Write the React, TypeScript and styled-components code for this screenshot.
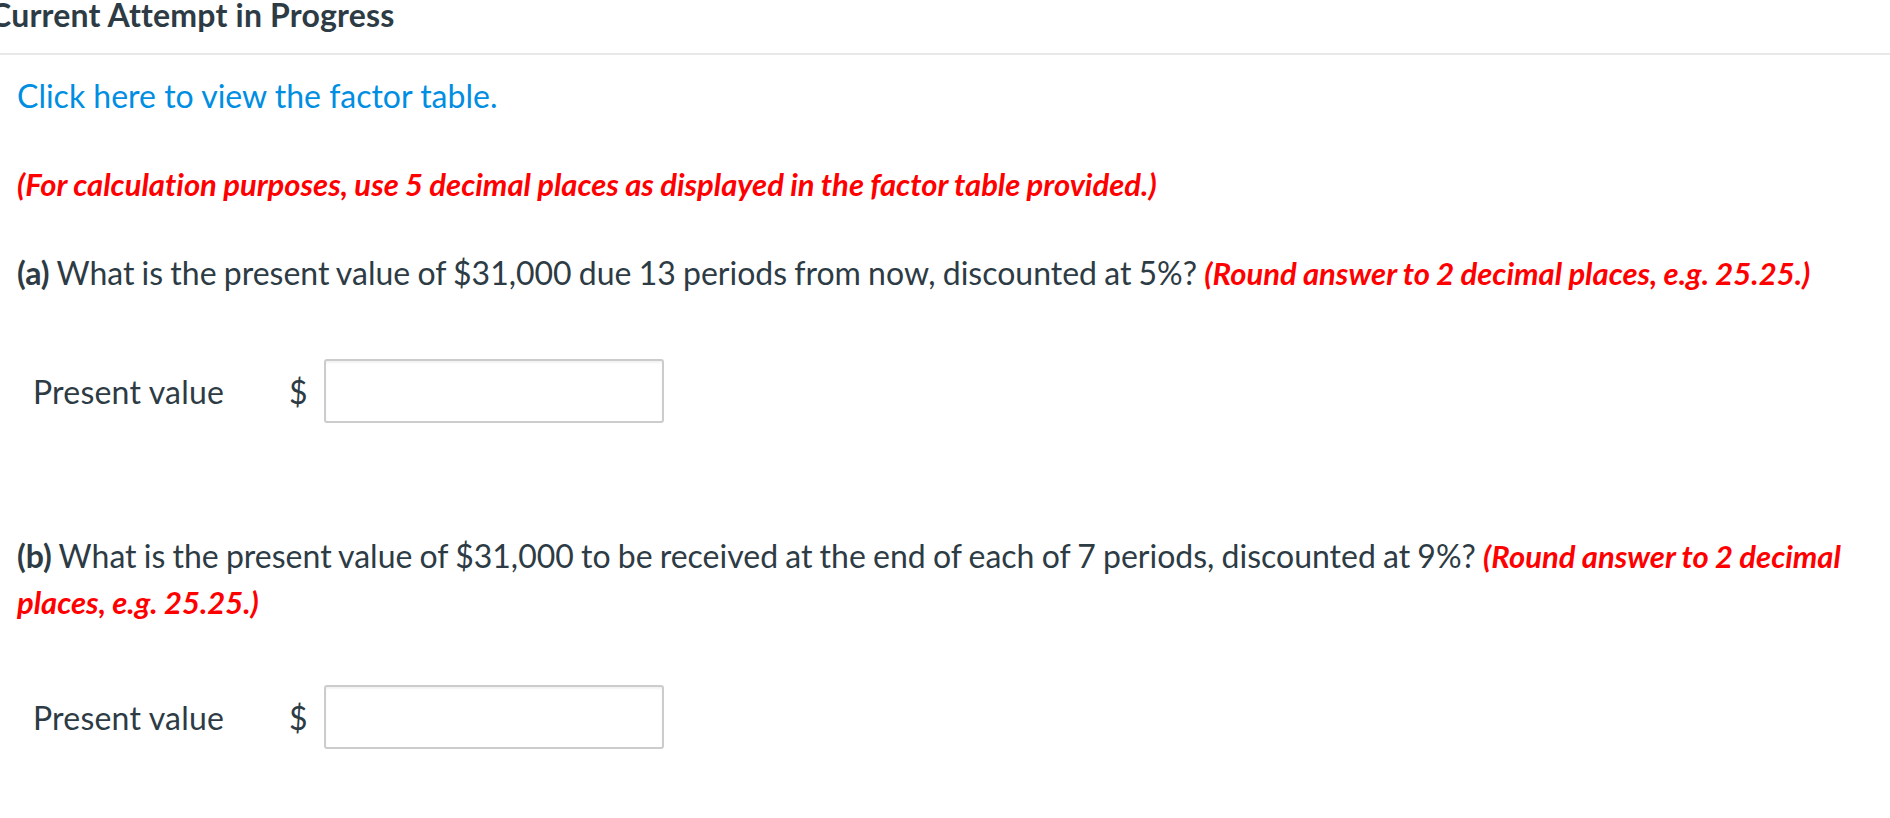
import styled, { createGlobalStyle } from "styled-components";

const GlobalStyle = createGlobalStyle`
  html, body {
    margin: 0;
    padding: 0;
    background: #ffffff;
  }
  body {
    font-family: Lato, "Open Sans", "Liberation Sans", sans-serif;
    font-variant-ligatures: none;
    color: #2d3b45;
    overflow: hidden;
  }
`;

const Page = styled.div`
  width: 1890px;
  height: 818px;
  overflow: hidden;
`;

const Header = styled.div`
  display: flex;
  align-items: flex-start;
  height: 53px;
  border-bottom: 2px solid #e8e8e8;
`;

const Title = styled.h2`
  margin: -5px 0 0 -10px;
  font-size: 32px;
  font-weight: 700;
  line-height: normal;
  letter-spacing: 0.2px;
  color: #2d3b45;
`;

const Body = styled.div`
  padding: 18px 20px 0 17px;
  font-size: 32px;
  line-height: 45px;
`;

const Link = styled.a`
  display: block;
  color: #008ee2;
  text-decoration: none;
  cursor: pointer;
`;

const Para = styled.p<{ $top: number }>`
  margin: ${(p) => p.$top}px 0 0;
  word-spacing: -1px;
`;

const Hint = styled.span`
  color: #ff0000;
  font-size: 31px;
  font-weight: 700;
  font-style: italic;
  word-spacing: -0.5px;
`;

const Part = styled.strong`
  font-weight: 700;
`;

const AnswerRow = styled.div<{ $top: number }>`
  display: flex;
  align-items: center;
  margin-top: ${(p) => p.$top}px;
  padding-left: 16px;
`;

const Label = styled.span`
  width: 256px;
  letter-spacing: 0.2px;
`;

const Currency = styled.span`
  width: 35px;
`;

const AmountInput = styled.input`
  box-sizing: border-box;
  width: 340px;
  height: 64px;
  border: 2px solid #cccccc;
  border-radius: 3px;
  box-shadow: inset 0 2px 2px rgba(0, 0, 0, 0.05);
  background: #ffffff;
  font: inherit;
  padding: 0 12px;
  outline: none;
`;

const Answer = ({ top }: { top: number }) => (
  <AnswerRow $top={top}>
    <Label>Present value</Label>
    <Currency>$</Currency>
    <AmountInput type="text" aria-label="Present value" />
  </AnswerRow>
);

const App = () => {
  return (
    <Page>
      <GlobalStyle />
      <Header>
        <Title>Current Attempt in Progress</Title>
      </Header>
      <Body>
        <Link>Click here to view the factor table.</Link>
        <Para $top={43}>
          <Hint>
            (For calculation purposes, use 5 decimal places as displayed in the
            factor table provided.)
          </Hint>
        </Para>
        <Para $top={43}>
          <Part>(a)</Part> What is the present value of $31,000 due 13 periods
          from now, discounted at 5%?{" "}
          <Hint>(Round answer to 2 decimal places, e.g. 25.25.)</Hint>
        </Para>
        <Answer top={63} />
        <Para $top={110}>
          <Part>(b)</Part> What is the present value of $31,000 to be received
          at the end of each of 7 periods, discounted at 9%?{" "}
          <Hint>(Round answer to 2 decimal places, e.g. 25.25.)</Hint>
        </Para>
        <Answer top={60} />
      </Body>
    </Page>
  );
};

export default App;
